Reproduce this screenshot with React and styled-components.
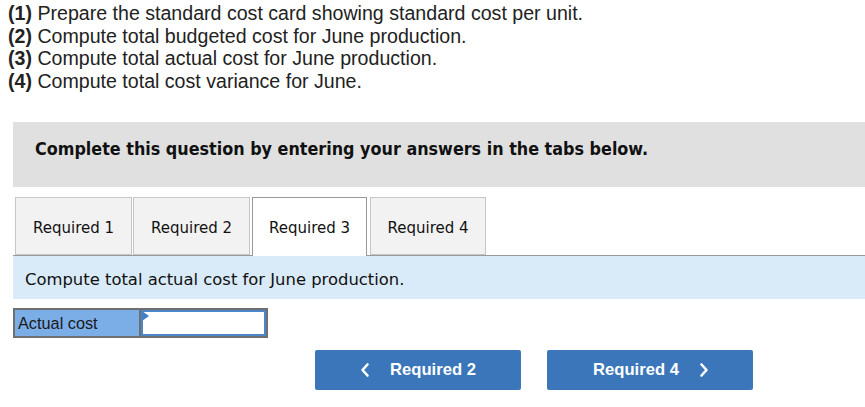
import React from "react";
import styled, { createGlobalStyle } from "styled-components";

const Global = createGlobalStyle`
  html, body { margin: 0; padding: 0; background: #fff; }
  body { overflow: hidden; width: 865px; height: 407px; }
`;

const Page = styled.div`
  width: 865px;
  overflow: hidden;
`;

const Instructions = styled.div`
  padding: 2px 0 0 8px;
  font-family: "Liberation Sans", Arial, sans-serif;
  font-size: 19.6px;
  line-height: 22.6px;
  color: #222;
`;

const Line = styled.div`
  white-space: nowrap;
  height: 22.6px;
`;

const Num = styled.b`
  font-weight: 700;
`;

const Work = styled.div`
  margin: 30px 0 0 13px;
  width: 870px;
`;

const Banner = styled.div`
  background: #e0e0e0;
  height: 65px;
  box-sizing: border-box;
  display: flex;
  align-items: center;
  padding: 0 0 12px 22px;
  font-family: "DejaVu Sans Condensed", "DejaVu Sans", Verdana, sans-serif;
  font-stretch: condensed;
  font-weight: 700;
  font-size: 17.8px;
  color: #111;
  white-space: nowrap;
`;

const TabStrip = styled.div`
  margin-top: 10px;
  display: flex;
  align-items: flex-end;
  padding-left: 2px;
  border-bottom: 1px solid #999;
  height: 58px;
`;

const Tab = styled.div`
  box-sizing: border-box;
  width: ${(p) => p.$w}px;
  height: ${(p) => (p.$active ? 59 : 58)}px;
  margin-right: ${(p) => p.$gap}px;
  margin-bottom: ${(p) => (p.$active ? -1 : 0)}px;
  background: ${(p) => (p.$active ? "#fff" : "#f2f2f2")};
  border: 1px solid ${(p) => (p.$active ? "#999" : "#c6c6c6")};
  border-bottom: ${(p) => (p.$active ? "none" : "1px solid #c6c6c6")};
  display: flex;
  align-items: center;
  justify-content: center;
  padding-top: 3px;
  padding-bottom: ${(p) => (p.$active ? 1 : 0)}px;
  font-family: "DejaVu Sans", Verdana, sans-serif;
  font-size: 15px;
  color: #111;
`;

const Prompt = styled.div`
  background: #d9eaf8;
  height: 43px;
  box-sizing: border-box;
  display: flex;
  align-items: center;
  padding: 3px 0 0 12px;
  font-family: "DejaVu Sans", Verdana, sans-serif;
  font-size: 16.4px;
  color: #111;
`;

const AnswerRow = styled.div`
  margin-top: 9px;
  display: flex;
  width: 255px;
  height: 30px;
  box-sizing: border-box;
  border: 2px solid #6f6f6f;
`;

const Label = styled.div`
  width: 126px;
  background: #7badE7;
  display: flex;
  align-items: center;
  padding-left: 3px;
  font-family: "Liberation Sans", Arial, sans-serif;
  font-size: 16.3px;
  color: #1a1a1a;
  box-sizing: border-box;
  border-right: 2px solid #6f6f6f;
`;

const InputCell = styled.div`
  position: relative;
  flex: 1;
  background: #fff;
  border: 2px solid #4a86c8;
`;

const Flag = styled.div`
  position: absolute;
  left: -1px;
  top: -1px;
  width: 0;
  height: 0;
  border-top: 5px solid transparent;
  border-bottom: 5px solid transparent;
  border-left: 7px solid #3f7fc9;
`;

const Nav = styled.div`
  margin-top: 12px;
  margin-left: 315px;
  display: flex;
  gap: 26px;
`;

const NavButton = styled.button`
  width: 206px;
  height: 40px;
  border: none;
  border-radius: 2px;
  background: #3a76b9;
  color: #fff;
  font-family: "Liberation Sans", Arial, sans-serif;
  font-weight: 700;
  font-size: 16.6px;
  display: flex;
  align-items: center;
  justify-content: center;
  gap: 20px;
  padding: 0 0 0 ${(p) => (p.$prev ? 0 : 2)}px;
  cursor: pointer;
`;

const Chevron = ({ dir }) => (
  <svg width="10" height="16" viewBox="0 0 10 16">
    <path
      d={dir === "left" ? "M7.5 2.5 L2.5 8 L7.5 13.5" : "M2.5 2.5 L7.5 8 L2.5 13.5"}
      fill="none"
      stroke="#fff"
      strokeWidth="2.6"
      strokeLinecap="round"
      strokeLinejoin="round"
    />
  </svg>
);

const tabs = [
  { t: "Required 1", w: 117, gap: 1 },
  { t: "Required 2", w: 117, gap: 2 },
  { t: "Required 3", w: 115, gap: 3, active: true },
  { t: "Required 4", w: 116, gap: 0 },
];

export default function App() {
  return (
    <Page>
      <Global />
      <Instructions>
        <Line><Num>(1)</Num> Prepare the standard cost card showing standard cost per unit.</Line>
        <Line><Num>(2)</Num> Compute total budgeted cost for June production.</Line>
        <Line><Num>(3)</Num> Compute total actual cost for June production.</Line>
        <Line><Num>(4)</Num> Compute total cost variance for June.</Line>
      </Instructions>
      <Work>
        <Banner>Complete this question by entering your answers in the tabs below.</Banner>
        <TabStrip>
          {tabs.map((x) => (
            <Tab key={x.t} $w={x.w} $gap={x.gap} $active={x.active}>
              {x.t}
            </Tab>
          ))}
        </TabStrip>
        <Prompt>Compute total actual cost for June production.</Prompt>
        <AnswerRow>
          <Label>Actual cost</Label>
          <InputCell>
            <Flag />
          </InputCell>
        </AnswerRow>
      </Work>
      <Nav>
        <NavButton $prev>
          <Chevron dir="left" />
          <span>Required 2</span>
        </NavButton>
        <NavButton>
          <span>Required 4</span>
          <Chevron dir="right" />
        </NavButton>
      </Nav>
    </Page>
  );
}
